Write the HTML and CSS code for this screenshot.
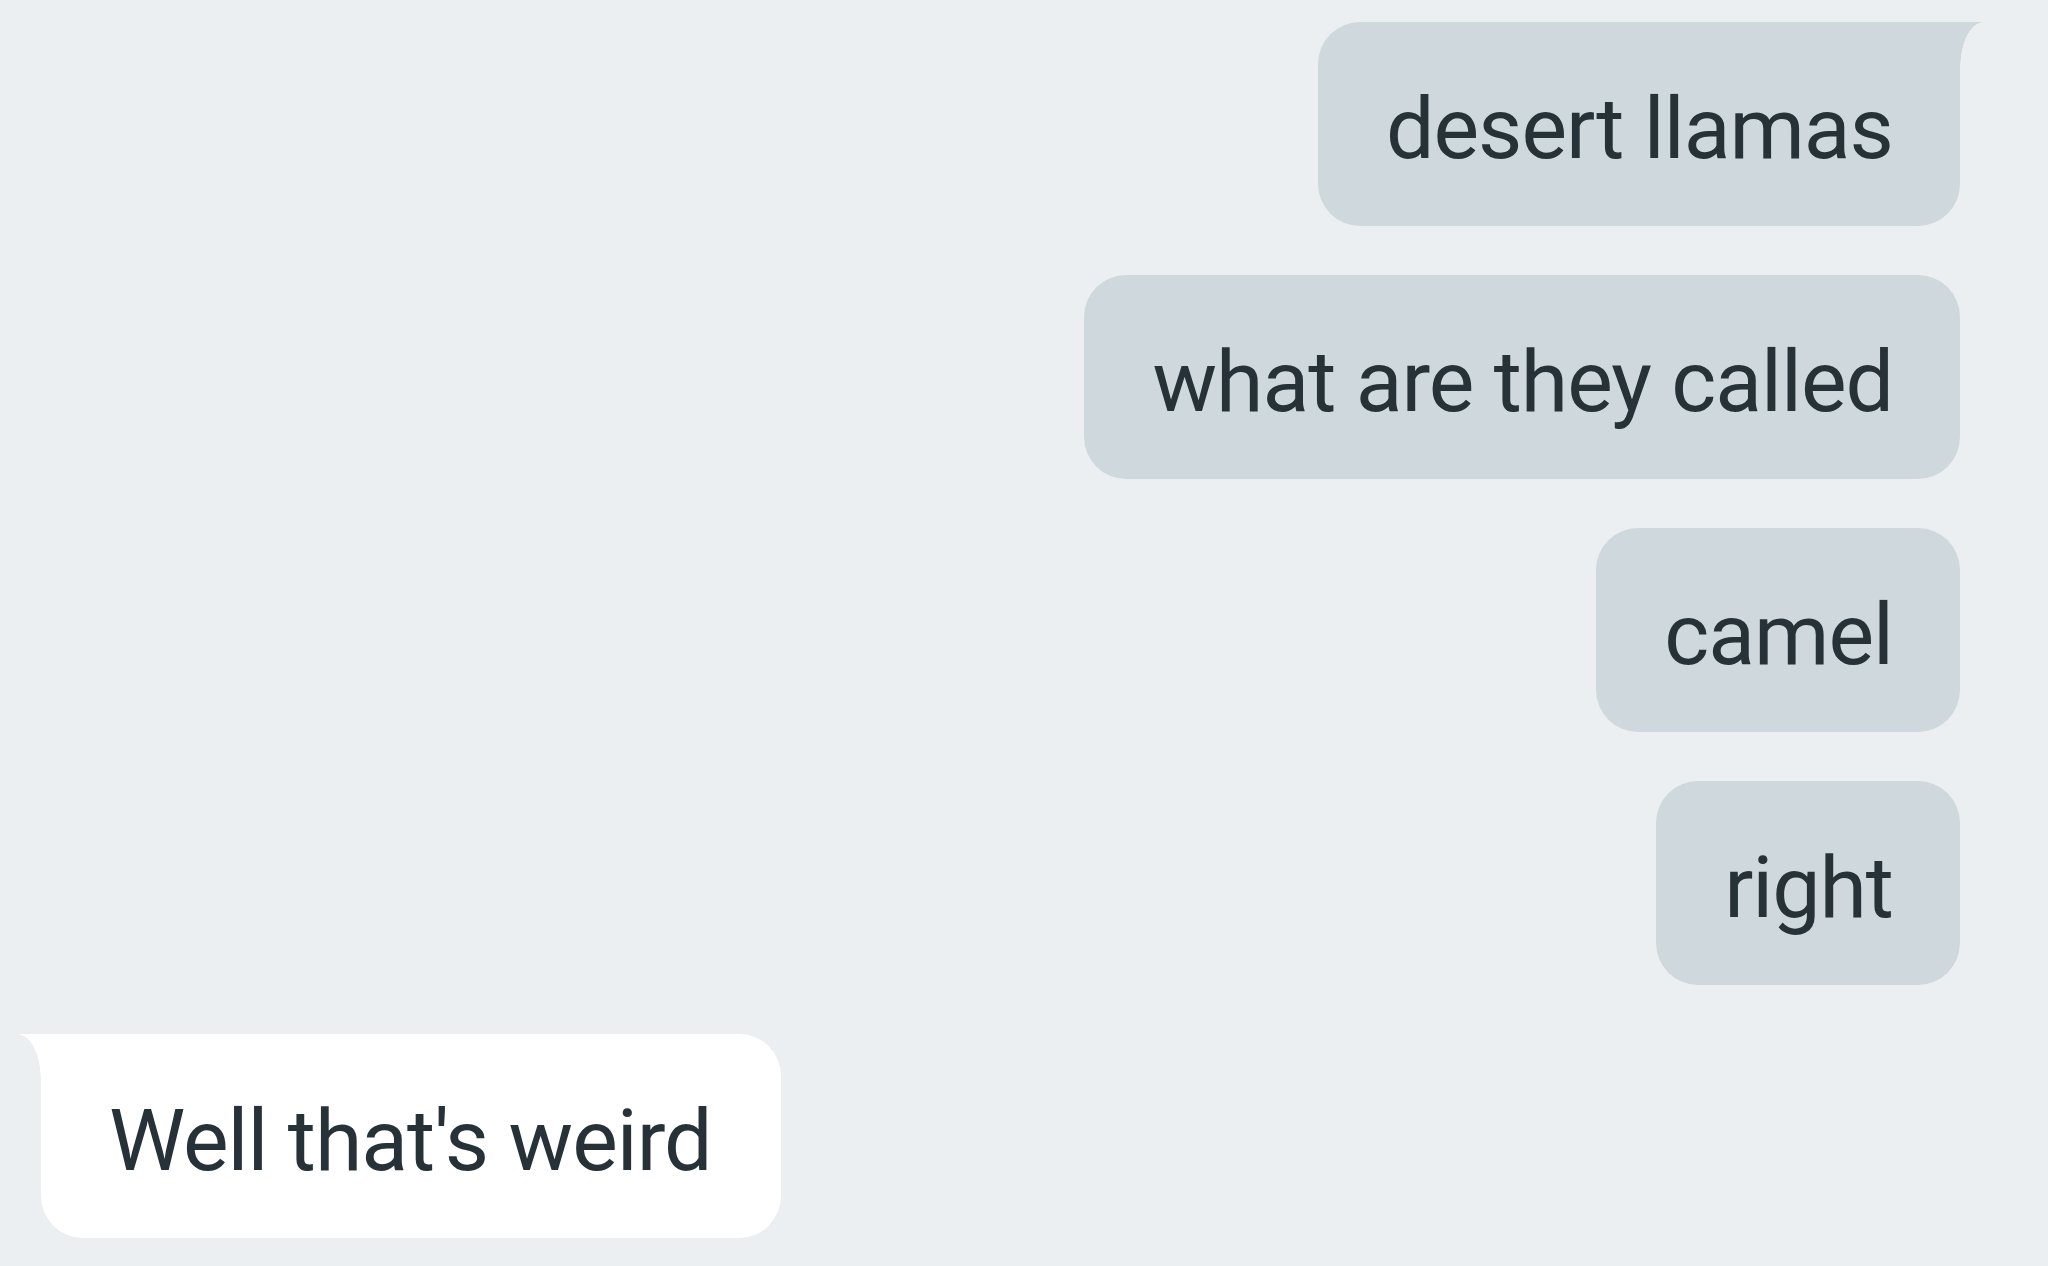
FILE: index.html
```html
<!DOCTYPE html>
<html lang="en">
<head>
  <meta charset="UTF-8" />
  <meta name="viewport" content="width=device-width, initial-scale=1" />
  <title>Chat</title>
  <link rel="stylesheet" href="styles.css">
</head>
<body>
  <div class="thread">
    <div class="bubble out first">desert llamas</div>
    <div class="bubble out">what are they called</div>
    <div class="bubble out">camel</div>
    <div class="bubble out">right</div>
    <div class="bubble in first">Well that's weird</div>
  </div>
</body>
</html>
```

FILE: styles.css
```css
body {
  margin: 0;
  padding: 0;
  background-color: #eceff1;
  color: #263238;
  font-family: Roboto, "Noto Sans", Arial, sans-serif;
}
.thread {
  display: flex;
  flex-direction: column;
  gap: 49px;
  padding: 22px 88px 0 41px;
}
.bubble {
  position: relative;
  font-size: 86px;
  line-height: 100px;
  letter-spacing: -1px;
  padding: 57px 67px 47px 68px;
  border-radius: 42px;
  white-space: nowrap;
}
.bubble.out {
  align-self: flex-end;
  background-color: #cfd8dc;
}
.bubble.in {
  align-self: flex-start;
  background-color: #fff;
  padding-right: 69px;
}
.bubble.out.first {
  border-top-right-radius: 0;
}
.bubble.out.first::after {
  content: "";
  position: absolute;
  top: 0;
  right: -23px;
  width: 23px;
  height: 46px;
  background: radial-gradient(ellipse 23px 46px at 100% 100%, transparent 98%, #cfd8dc 100%);
  border-top-right-radius: 3px;
}
.bubble.in.first {
  border-top-left-radius: 0;
}
.bubble.in.first::before {
  content: "";
  position: absolute;
  top: 0;
  left: -23px;
  width: 23px;
  height: 46px;
  background: radial-gradient(ellipse 23px 46px at 0% 100%, transparent 98%, #fff 100%);
  border-top-left-radius: 3px;
}
```
